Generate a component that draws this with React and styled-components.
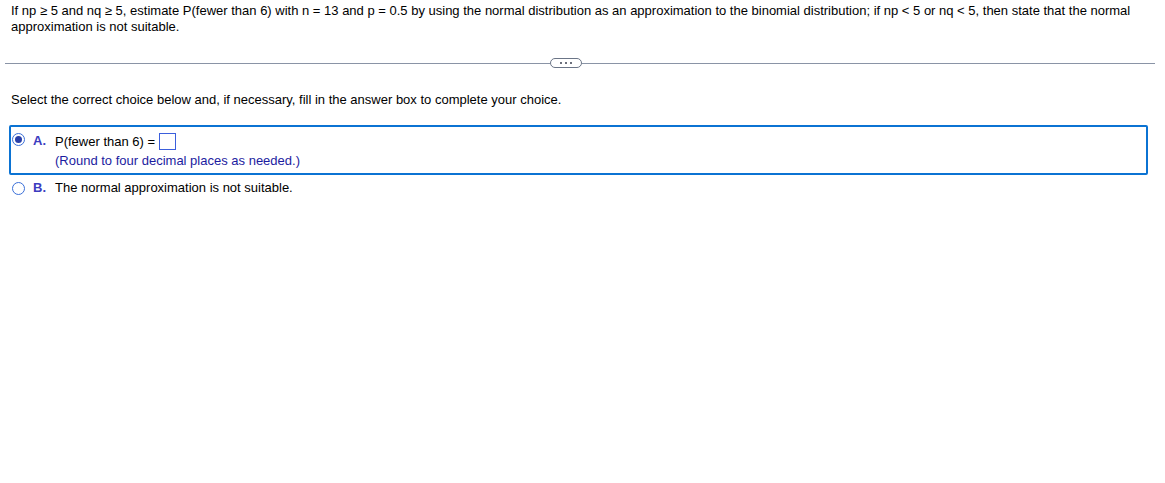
import React from "react";
import styled, { createGlobalStyle } from "styled-components";

const Global = createGlobalStyle`
  html, body { margin: 0; padding: 0; background: #fff; }
  body { font-family: "Liberation Sans", Arial, sans-serif; color: #000; }
`;

const Page = styled.div`
  width: 1165px;
  height: 483px;
  box-sizing: border-box;
  padding: 3px 0 0 0;
`;

const Question = styled.p`
  margin: 0;
  padding: 0 0 0 11px;
  font-size: 13px;
  line-height: 16px;
`;

const DividerRow = styled.div`
  display: flex;
  align-items: center;
  margin: 23px 10px 0 5px;
  height: 10px;
`;

const Line = styled.div`
  flex: ${(p) => p.$grow};
  height: 1px;
  background: #8a94a6;
`;

const MoreButton = styled.div`
  width: 30px;
  height: 8px;
  border: 1px solid #6b7587;
  border-radius: 5px;
  display: flex;
  align-items: center;
  justify-content: center;
  gap: 3px;
  background: #fff;
`;

const Dot = styled.span`
  width: 2px;
  height: 2px;
  background: #3b4150;
  border-radius: 1px;
`;

const Instruction = styled.p`
  margin: 24px 0 0 11px;
  font-size: 13px;
  line-height: 16px;
`;

const Choices = styled.div`
  margin: 17px 17px 0 9px;
  display: flex;
  flex-direction: column;
`;

const Choice = styled.div`
  display: flex;
  align-items: flex-start;
  padding: ${(p) => (p.$selected ? "6px 0 4px 1px" : "5px 0 4px 3px")};
  border: ${(p) => (p.$selected ? "2px solid #0b73d3" : "none")};
  border-radius: 2px;
`;

const Radio = styled.span`
  width: 13px;
  height: 13px;
  border-radius: 50%;
  border: 1px solid #3a6fd8;
  box-sizing: border-box;
  margin-top: ${(p) => p.$top}px;
  flex: none;
  display: flex;
  align-items: center;
  justify-content: center;
  background: #fff;
  &::after {
    content: "";
    display: ${(p) => (p.$checked ? "block" : "none")};
    width: 7px;
    height: 7px;
    border-radius: 50%;
    background: #2a3fa8;
  }
`;

const Letter = styled.span`
  font-weight: bold;
  color: #3c3cbf;
  font-size: 13px;
  line-height: 16px;
  width: 22px;
  margin-left: 8px;
  flex: none;
`;

const Body = styled.div`
  display: flex;
  flex-direction: column;
  font-size: 13px;
  line-height: 16px;
`;

const AnswerLine = styled.div`
  display: flex;
  align-items: center;
`;

const AnswerBox = styled.span`
  display: inline-block;
  box-sizing: border-box;
  width: 17px;
  height: 17px;
  border: 1px solid #3b5fdc;
  margin-left: 4px;
`;

const Hint = styled.div`
  color: #1c1ca0;
  margin-top: 3px;
`;

export default function App() {
  return (
    <Page>
      <Global />
      <Question>
        If np ≥ 5 and nq ≥ 5, estimate P(fewer than 6) with n = 13 and p = 0.5 by using the normal
        distribution as an approximation to the binomial distribution; if np &lt; 5 or nq &lt; 5, then
        state that the normal approximation is not suitable.
      </Question>
      <DividerRow>
        <Line $grow={545} />
        <MoreButton>
          <Dot />
          <Dot />
          <Dot />
        </MoreButton>
        <Line $grow={574} />
      </DividerRow>
      <Instruction>
        Select the correct choice below and, if necessary, fill in the answer box to complete your choice.
      </Instruction>
      <Choices>
        <Choice $selected>
          <Radio $checked $top={0} />
          <Letter>A.</Letter>
          <Body>
            <AnswerLine>
              P(fewer than 6) =<AnswerBox />
            </AnswerLine>
            <Hint>(Round to four decimal places as needed.)</Hint>
          </Body>
        </Choice>
        <Choice>
          <Radio $top={2} />
          <Letter>B.</Letter>
          <Body>The normal approximation is not suitable.</Body>
        </Choice>
      </Choices>
    </Page>
  );
}
